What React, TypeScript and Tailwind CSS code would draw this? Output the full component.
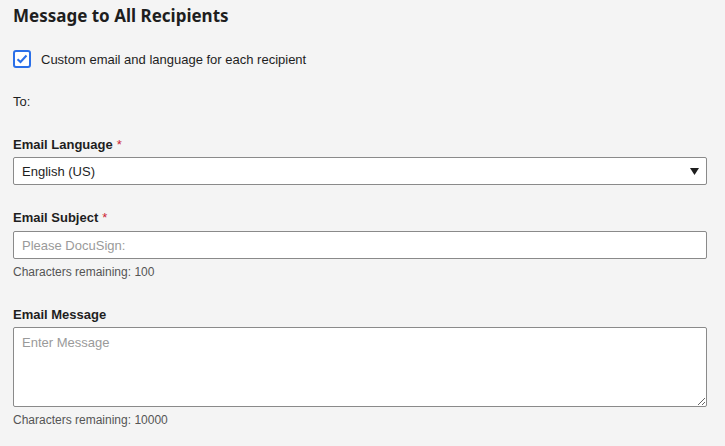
import React, { useState } from 'react';

const sans = { fontFamily: '"Liberation Sans", Arial, sans-serif' };

function Label({ text, required }: { text: string; required?: boolean }) {
  return (
    <div className="h-[18px] pt-[2px] flex items-center text-[13px] font-bold text-[#1e1e1e]">
      {text}
      {required && <span className="ml-[4px] text-[#cc1f33] font-normal">*</span>}
    </div>
  );
}

export default function App() {
  const [custom, setCustom] = useState(true);
  const [subject, setSubject] = useState('');
  const [message, setMessage] = useState('');

  return (
    <div className="min-h-[446px] bg-[#f4f4f4] pl-[13px] pr-[18px] text-[#1e1e1e]" style={sans}>
      <h2
        className="h-[32px] flex items-center text-[17px] font-bold text-[#1e1e1e]"
        style={{ fontFamily: '"Noto Sans", Lato, sans-serif' }}
      >
        Message to All Recipients
      </h2>

      <label className="mt-[18px] h-[18px] flex items-center gap-[10px] text-[13px] cursor-pointer">
        <button
          type="button"
          onClick={() => setCustom(!custom)}
          className="w-[18px] h-[18px] rounded-[3px] border-2 border-[#2a6fe8] bg-white flex items-center justify-center"
        >
          {custom && (
            <svg width="12" height="10" viewBox="0 0 12 10">
              <path d="M1.5 5.2 L4.5 8 L10.5 1.5" fill="none" stroke="#2a6fe8" strokeWidth="2" />
            </svg>
          )}
        </button>
        <span className="pt-[2px]">Custom email and language for each recipient</span>
      </label>

      <div className="mt-[24px] h-[18px] pt-[2px] flex items-center text-[13px]">To:</div>

      <div className="mt-[25px]">
        <Label text="Email Language" required />
      </div>
      <div className="mt-[4px] h-[28px] bg-white border border-[#8a8a8a] rounded-[2px] flex items-center justify-between pl-[8px] pr-[7px] text-[13px]">
        <span className="pt-[1px]">English (US)</span>
        <svg width="9" height="7" viewBox="0 0 9 7">
          <path d="M0 0 H9 L4.5 7 Z" fill="#1e1e1e" />
        </svg>
      </div>

      <div className="mt-[23px]">
        <Label text="Email Subject" required />
      </div>
      <input
        value={subject}
        onChange={(e) => setSubject(e.target.value)}
        placeholder="Please DocuSign:"
        maxLength={100}
        className="mt-[5px] block w-full h-[28px] bg-white border border-[#8a8a8a] rounded-[2px] px-[8px] pt-[1px] text-[13px] outline-none placeholder:text-[#9a9a9a]"
        style={sans}
      />
      <div className="mt-[3px] h-[18px] pt-[2px] flex items-center text-[12px] text-[#555]">
        Characters remaining: {100 - subject.length}
      </div>

      <div className="mt-[25px]">
        <Label text="Email Message" />
      </div>
      <textarea
        value={message}
        onChange={(e) => setMessage(e.target.value)}
        placeholder="Enter Message"
        maxLength={10000}
        className="mt-[4px] block w-full h-[80px] bg-white border border-[#8a8a8a] rounded-[2px] px-[8px] py-[5px] text-[13px] outline-none placeholder:text-[#9a9a9a]"
        style={sans}
      />
      <div className="mt-[3px] h-[18px] pt-[2px] flex items-center text-[12px] text-[#555]">
        Characters remaining: {10000 - message.length}
      </div>
    </div>
  );
}
